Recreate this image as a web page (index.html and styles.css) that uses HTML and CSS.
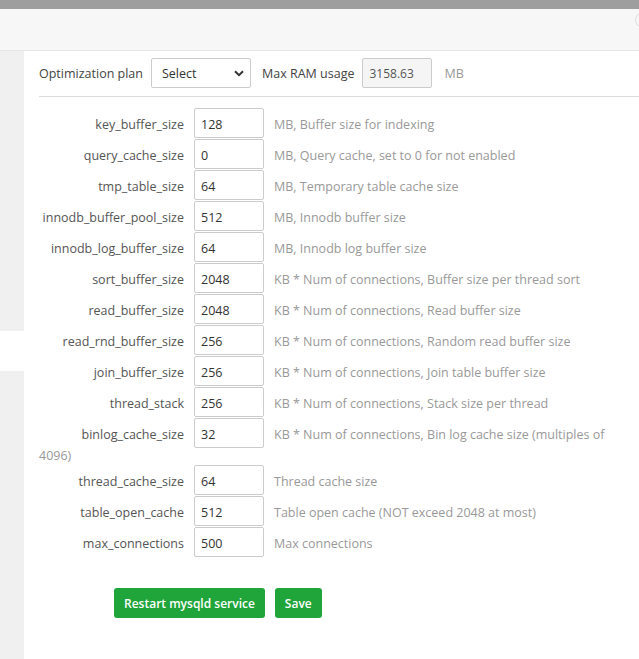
FILE: index.html
```html
<!DOCTYPE html>
<html lang="en">
<head>
  <meta charset="UTF-8">
  <title>MySQL performance tuning</title>
  <link rel="stylesheet" href="styles.css">
</head>
<body>
<div class="topbar"></div>
<div class="header"><span class="close-dot"></span></div>

<div class="layout">
  <div class="sidebar">
    <div class="side-item active"></div>
  </div>

  <div class="content">
    <div class="toolbar">
      <span class="tb-label">Optimization plan</span>
      <div class="select-wrap">
        <select class="plan-select">
          <option>Select</option>
        </select>
        <svg class="chevron" width="10" height="7" viewBox="0 0 10 7">
          <path d="M1 1.2 L5 5.2 L9 1.2" fill="none" stroke="#333" stroke-width="2"/>
        </svg>
      </div>
      <span class="tb-label">Max RAM usage</span>
      <input class="field ram" type="text" value="3158.63" disabled>
      <span class="unit">MB</span>
    </div>

    <div class="conf-list">
      <p class="conf-row"><span class="conf-name">key_buffer_size</span><input class="field" type="text" value="128"><span class="conf-desc">MB, Buffer size for indexing</span></p>
      <p class="conf-row"><span class="conf-name">query_cache_size</span><input class="field" type="text" value="0"><span class="conf-desc">MB, Query cache, set to 0 for not enabled</span></p>
      <p class="conf-row"><span class="conf-name">tmp_table_size</span><input class="field" type="text" value="64"><span class="conf-desc">MB, Temporary table cache size</span></p>
      <p class="conf-row"><span class="conf-name">innodb_buffer_pool_size</span><input class="field" type="text" value="512"><span class="conf-desc">MB, Innodb buffer size</span></p>
      <p class="conf-row"><span class="conf-name">innodb_log_buffer_size</span><input class="field" type="text" value="64"><span class="conf-desc">MB, Innodb log buffer size</span></p>
      <p class="conf-row"><span class="conf-name">sort_buffer_size</span><input class="field" type="text" value="2048"><span class="conf-desc">KB * Num of connections, Buffer size per thread sort</span></p>
      <p class="conf-row"><span class="conf-name">read_buffer_size</span><input class="field" type="text" value="2048"><span class="conf-desc">KB * Num of connections, Read buffer size</span></p>
      <p class="conf-row"><span class="conf-name">read_rnd_buffer_size</span><input class="field" type="text" value="256"><span class="conf-desc">KB * Num of connections, Random read buffer size</span></p>
      <p class="conf-row"><span class="conf-name">join_buffer_size</span><input class="field" type="text" value="256"><span class="conf-desc">KB * Num of connections, Join table buffer size</span></p>
      <p class="conf-row"><span class="conf-name">thread_stack</span><input class="field" type="text" value="256"><span class="conf-desc">KB * Num of connections, Stack size per thread</span></p>
      <p class="conf-row"><span class="conf-name">binlog_cache_size</span><input class="field" type="text" value="32"><span class="conf-desc">KB * Num of connections, Bin log cache size (multiples of 4096)</span></p>
      <p class="conf-row"><span class="conf-name">thread_cache_size</span><input class="field" type="text" value="64"><span class="conf-desc">Thread cache size</span></p>
      <p class="conf-row"><span class="conf-name">table_open_cache</span><input class="field" type="text" value="512"><span class="conf-desc">Table open cache (NOT exceed 2048 at most)</span></p>
      <p class="conf-row"><span class="conf-name">max_connections</span><input class="field" type="text" value="500"><span class="conf-desc">Max connections</span></p>
    </div>

    <div class="actions">
      <button class="btn-green">Restart mysqld service</button>
      <button class="btn-green">Save</button>
    </div>
  </div>
</div>
</body>
</html>
```

FILE: styles.css
```css
html, body {
  margin: 0;
  padding: 0;
  height: 100%;
}

body {
  font-family: "Open Sans", "Noto Sans", sans-serif;
  font-size: 12.5px;
  color: #555;
  background-color: #fff;
  overflow: hidden;
}

.topbar {
  height: 9px;
  background-color: #9e9e9e;
}

.header {
  height: 41px;
  background-color: #f7f7f7;
  border-bottom: 1px solid #e6e6e6;
  position: relative;
}

.close-dot {
  position: absolute;
  right: -12px;
  top: 3px;
  width: 14px;
  height: 14px;
  border: 1px solid #ddd;
  border-radius: 50%;
}

.layout {
  display: flex;
  height: 608px;
}

.sidebar {
  width: 24px;
  background-color: #f0f0f0;
  padding-top: 280px;
}

.side-item {
  height: 40px;
}

.side-item.active {
  background-color: #fff;
}

.content {
  flex: 1;
  padding: 7px 0 0 15px;
}

/* barra superior */
.toolbar {
  display: flex;
  align-items: center;
  height: 30px;
  padding-bottom: 8px;
  border-bottom: 1px solid #ddd;
  color: #444;
}

.tb-label {
  margin-right: 8px;
}

.select-wrap {
  position: relative;
  margin-right: 11px;
}

.plan-select {
  appearance: none;
  -webkit-appearance: none;
  width: 100px;
  height: 30px;
  padding: 0 10px;
  border: 1px solid #ccc;
  border-radius: 2px;
  background-color: #fff;
  font-family: inherit;
  font-size: 12.5px;
  color: #333;
  outline: none;
}

.chevron {
  position: absolute;
  right: 7px;
  top: 12px;
  pointer-events: none;
}

.field {
  box-sizing: border-box;
  width: 70px;
  height: 30px;
  padding: 0 6px;
  border: 1px solid #ccc;
  border-radius: 2px;
  font-family: inherit;
  font-size: 12.5px;
  color: #333;
  background-color: #fff;
  outline: none;
}

.field.ram {
  background-color: #f5f5f5;
  color: #555;
  font-size: 12px;
}

.unit {
  margin-left: 12px;
  color: #999;
}

/* lista de parametros */
.conf-list {
  padding-top: 11px;
}

.conf-row {
  margin: 0 0 1px;
  line-height: 16px;
}

.conf-name {
  display: inline-block;
  width: 145px;
  margin-right: 10px;
  text-align: right;
  color: #555;
}

.conf-row .field {
  vertical-align: baseline;
  padding-top: 3px;
  padding-bottom: 0;
  margin-right: 10px;
}

.conf-desc {
  color: #999;
}

.actions {
  display: flex;
  gap: 10px;
  margin: 31px 0 0 75px;
}

.btn-green {
  height: 30px;
  padding: 0 10px;
  border: none;
  border-radius: 3px;
  background-color: #20a53a;
  color: #fff;
  font-family: inherit;
  font-size: 12px;
  font-weight: 600;
  cursor: pointer;
}
```
